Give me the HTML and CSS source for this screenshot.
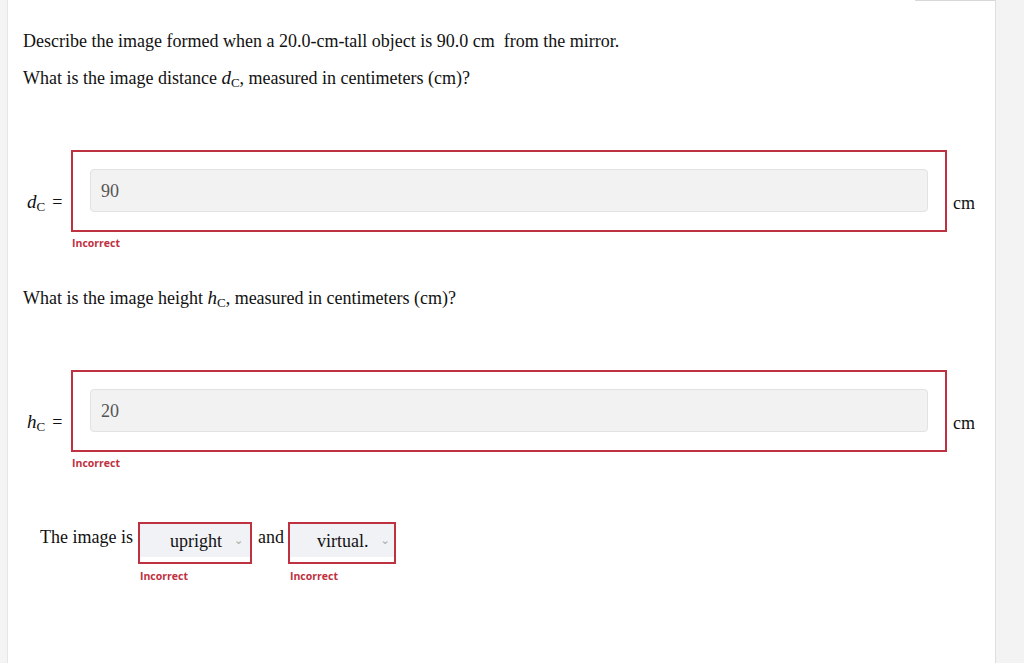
FILE: index.html
```html
<!DOCTYPE html>
<html lang="en">
<head>
    <meta charset="UTF-8">
    <title>Question</title>
    <link rel="stylesheet" href="styles.css">
</head>
<body>
    <div class="page">
        <div class="left-strip"></div>

        <div class="main">
            <div class="top-line"><span></span></div>

            <p class="text first">Describe the image formed when a 20.0-cm-tall object is 90.0&nbsp;cm&nbsp; from the mirror.</p>
            <p class="text">What is the image distance <i>d</i><sub>C</sub>, measured in centimeters (cm)?</p>

            <!-- Answer 1 -->
            <div class="answer-row">
                <div class="var"><i>d</i><sub>C</sub><span class="eq">=</span></div>
                <div class="answer-box">
                    <div class="input">90</div>
                </div>
                <div class="unit">cm</div>
            </div>
            <div class="incorrect indent">Incorrect</div>

            <p class="text second">What is the image height <i>h</i><sub>C</sub>, measured in centimeters (cm)?</p>

            <!-- Answer 2 -->
            <div class="answer-row">
                <div class="var"><i>h</i><sub>C</sub><span class="eq">=</span></div>
                <div class="answer-box">
                    <div class="input">20</div>
                </div>
                <div class="unit">cm</div>
            </div>
            <div class="incorrect indent">Incorrect</div>

            <!-- Dropdowns -->
            <div class="select-row">
                <span class="phrase">The image is</span>
                <div class="select-wrap first-select">
                    <div class="select-box">
                        <div class="select upright">upright <span class="caret">&#8964;</span></div>
                    </div>
                    <div class="incorrect">Incorrect</div>
                </div>
                <span class="phrase and">and</span>
                <div class="select-wrap">
                    <div class="select-box">
                        <div class="select virtual">virtual. <span class="caret">&#8964;</span></div>
                    </div>
                    <div class="incorrect">Incorrect</div>
                </div>
            </div>
        </div>

        <div class="right-panel"></div>
    </div>
</body>
</html>
```

FILE: styles.css
```css
/* Page frame */
body {
    margin: 0;
    padding: 0;
    background-color: #ffffff;
    font-family: "Liberation Serif", "Times New Roman", serif;
    color: #111;
}
.page {
    display: flex;
    height: 663px;
    overflow: hidden;
}
.left-strip {
    width: 7px;
    background-color: #f4f4f4;
    border-right: 1px solid #e6e6e6;
}
.main {
    width: 987px;
    background-color: #fff;
}
.right-panel {
    flex: 1;
    background-color: #f3f3f3;
    border-left: 1px solid #dedede;
}
.top-line {
    display: flex;
    justify-content: flex-end;
    height: 1px;
}
.top-line span {
    width: 80px;
    border-top: 1px solid #d8d8d8;
}

/* Question text */
.text {
    font-size: 18px;
    line-height: 20px;
    margin: 17px 0 0 15px;
}
.text.first {
    margin-top: 30px;
}
.text.second {
    margin-top: 38px;
}
.text i, .var i {
    font-size: 19px;
}
sub {
    font-size: 13px;
    vertical-align: -3px;
    line-height: 0;
}

/* Numeric answers */
.answer-row {
    display: flex;
    align-items: center;
    margin-top: 62px;
}
.var {
    width: 44px;
    padding-left: 19px;
    font-size: 18px;
    padding-top: 22px;
}
.var .eq {
    margin-left: 7px;
}
.answer-box {
    width: 838px;
    height: 43px;
    padding: 17px 17px 18px 17px;
    border: 2px solid #bd3140;
}
.input {
    height: 43px;
    box-sizing: border-box;
    background-color: #f2f2f2;
    border: 1px solid #e2e2e2;
    border-radius: 4px;
    padding: 10px 0 0 10px;
    font-size: 18px;
    line-height: 22px;
    color: #555;
}
.unit {
    margin-left: 6px;
    font-size: 18px;
    padding-top: 24px;
}
.incorrect {
    font-family: "Open Sans", "Liberation Sans", sans-serif;
    font-weight: 700;
    font-size: 10.5px;
    line-height: 14px;
    color: #bf3040;
    margin-top: 4px;
}
.incorrect.indent {
    margin-left: 64px;
}

/* Dropdowns */
.select-row {
    display: flex;
    align-items: flex-start;
    margin-top: 52px;
    margin-left: 32px;
}
.phrase {
    font-size: 18px;
    line-height: 20px;
    padding-top: 5px;
}
.phrase.and {
    margin: 0 4px 0 6px;
}
.first-select {
    margin-left: 5px;
}
.select-box {
    border: 2px solid #bd3140;
    padding-bottom: 5px;
}
.select {
    height: 33px;
    background-color: #f1f2f6;
    font-size: 18px;
    line-height: 33px;
    display: flex;
    align-items: center;
    padding-top: 2px;
    box-sizing: border-box;
}
.select.upright {
    width: 110px;
    padding-left: 30px;
}
.select.virtual {
    width: 104px;
    padding-left: 27px;
}
.caret {
    font-family: "DejaVu Sans", sans-serif;
    font-size: 11px;
    font-weight: 700;
    color: #b4b4b4;
    margin-left: 12px;
    margin-top: -2px;
}
.select-wrap .incorrect {
    margin-top: 5px;
    margin-left: 2px;
}
```
